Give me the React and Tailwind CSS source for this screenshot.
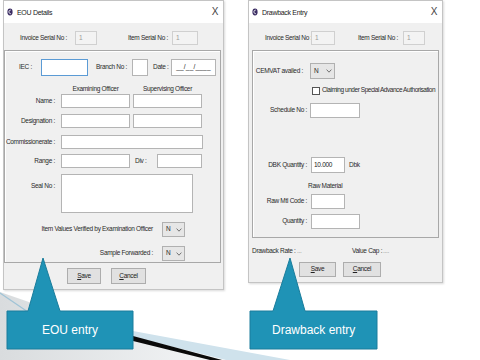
import clsx from "clsx";

function Field({ className, children }) {
  return (
    <div className={clsx("flex items-center border border-[#b4b4b4] bg-white px-[2px] text-[#222]", className)}>
      {children}
    </div>
  );
}

function ReadOnly({ className }) {
  return (
    <div className={clsx("flex items-center border border-[#d0d0d0] bg-[#f3f3f3] px-[3px] text-[#9a9a9a]", className)}>
      1
    </div>
  );
}

function Dropdown({ className }) {
  return (
    <div className={clsx("flex items-center justify-between border border-[#b0b0b0] bg-[#e6e6e6] pl-[3px] pr-[2px]", className)}>
      <span>N</span>
      <svg width="6" height="4" viewBox="0 0 6 4">
        <path d="M0.6 0.6 L3 3.2 L5.4 0.6" fill="none" stroke="#555" strokeWidth="0.8" />
      </svg>
    </div>
  );
}

function Btn({ label, className }) {
  return (
    <div className={clsx("flex items-center justify-center border border-[#adadad] bg-[#e1e1e1] text-[#222]", className)}>
      <span>
        <span className="underline">{label[0]}</span>
        {label.slice(1)}
      </span>
    </div>
  );
}

function TitleBar({ title }) {
  return (
    <div className="flex h-[22px] items-center justify-between bg-white pl-[3px] pr-[5px]">
      <div className="flex items-center gap-[4px]">
        <svg width="6" height="8" viewBox="0 0 6 8">
          <ellipse cx="3" cy="4" rx="2.6" ry="3.4" fill="#3b2d63" />
          <path d="M3.8 2 Q1.6 2.4 1.8 4 Q2 5.6 3.9 5.8" fill="none" stroke="#fff" strokeWidth="0.8" />
        </svg>
        <span className="text-[7px] text-[#222]">{title}</span>
      </div>
      <span className="text-[10px] font-light text-[#444]">X</span>
    </div>
  );
}

function EouWindow() {
  return (
    <div className="w-[221px] border border-[#c4c4c4] bg-[#f0f0f0] shadow-[1px_1px_2px_rgba(0,0,0,0.15)]">
      <TitleBar title="EOU Details" />
      <div className="mt-[8px] flex h-[14px] items-center pl-[16px]">
        <span className="w-[55px]">Invoice Serial No :</span>
        <ReadOnly className="h-[14px] w-[22px]" />
        <span className="ml-[31px] w-[44px]">Item Serial No :</span>
        <ReadOnly className="h-[14px] w-[26px]" />
      </div>

      <div className="mt-[5px] h-[213px] w-[217px] border border-[#a8a8a8] pt-[8px] shadow-[inset_1px_1px_0_#fff]">
        <div className="flex h-[17px] items-center">
          <span className="w-[27px] text-right">IEC :</span>
          <div className="ml-[9px] h-[17px] w-[47px] border border-[#5b9bd5] bg-white" />
          <span className="ml-[8px] w-[31px]">Branch No :</span>
          <Field className="ml-[5px] h-[17px] w-[16px]" />
          <span className="ml-[5px] w-[17px]">Date :</span>
          <Field className="ml-[1px] h-[17px] w-[45px] justify-center">
            <span className="tracking-[0.2px]">__/__/____</span>
          </Field>
        </div>

        <div className="flex h-[18px] items-end pb-[2px] pl-[56px]">
          <span className="w-[69px] text-center">Examining Officer</span>
          <span className="ml-[3px] w-[69px] text-center">Supervising Officer</span>
        </div>

        <div className="flex h-[14px] items-center">
          <span className="w-[50px] text-right">Name :</span>
          <Field className="ml-[6px] h-[14px] w-[69px]" />
          <Field className="ml-[3px] h-[14px] w-[69px]" />
        </div>
        <div className="mt-[6px] flex h-[14px] items-center">
          <span className="w-[50px] text-right">Designation :</span>
          <Field className="ml-[6px] h-[14px] w-[69px]" />
          <Field className="ml-[3px] h-[14px] w-[69px]" />
        </div>
        <div className="mt-[7px] flex h-[14px] items-center">
          <span className="w-[50px] text-right">Commissionerate :</span>
          <Field className="ml-[6px] h-[14px] w-[142px]" />
        </div>
        <div className="mt-[5px] flex h-[14px] items-center">
          <span className="w-[50px] text-right">Range :</span>
          <Field className="ml-[6px] h-[14px] w-[69px]" />
          <span className="ml-[5px] w-[22px]">Div :</span>
          <Field className="h-[14px] w-[45px]" />
        </div>
        <div className="mt-[6px] flex h-[39px] items-start">
          <span className="mt-[9px] w-[50px] text-right">Seal No :</span>
          <Field className="ml-[6px] h-[39px] w-[132px]" />
        </div>
        <div className="mt-[9px] flex h-[15px] items-center">
          <span className="w-[148px] text-right">Item Values Verified by Examination Officer</span>
          <Dropdown className="ml-[9px] h-[15px] w-[23px]" />
        </div>
        <div className="mt-[9px] flex h-[15px] items-center">
          <span className="w-[148px] text-right">Sample Forwarded :</span>
          <Dropdown className="ml-[9px] h-[15px] w-[23px]" />
        </div>
      </div>

      <div className="flex gap-[10px] pb-[5px] pl-[63px] pt-[5px]">
        <Btn label="Save" className="h-[16px] w-[34px]" />
        <Btn label="Cancel" className="h-[16px] w-[35px]" />
      </div>
    </div>
  );
}

function DrawbackWindow() {
  return (
    <div className="w-[195px] border border-[#c4c4c4] bg-[#f0f0f0] shadow-[1px_1px_2px_rgba(0,0,0,0.15)]">
      <TitleBar title="Drawback Entry" />
      <div className="mt-[8px] flex h-[14px] items-center pl-[16px]">
        <span className="w-[46px]">Invoice Serial No :</span>
        <ReadOnly className="h-[14px] w-[24px]" />
        <span className="ml-[23px] w-[45px]">Item Serial No :</span>
        <ReadOnly className="h-[14px] w-[22px]" />
      </div>

      <div className="ml-[3px] mt-[5px] h-[188px] w-[187px] border border-[#a8a8a8] pt-[12px] shadow-[inset_1px_1px_0_#fff]">
        <div className="flex h-[16px] items-center">
          <span className="w-[54px] pr-[4px] text-right">CEMVAT availed :</span>
          <Dropdown className="ml-[3px] h-[16px] w-[25px]" />
        </div>
        <div className="ml-[59px] mt-[7px] flex h-[9px] items-center">
          <div className="h-[8px] w-[8px] border border-[#555] bg-white" />
          <span className="ml-[2px] tracking-[-0.45px]">Claiming under Special Advance Authorisation</span>
        </div>
        <div className="mt-[8px] flex h-[15px] items-center">
          <span className="w-[54px] text-right">Schedule No :</span>
          <Field className="ml-[3px] h-[15px] w-[50px]" />
        </div>
        <div className="mt-[39px] flex h-[16px] items-center">
          <span className="w-[54px] text-right">DBK Quantity :</span>
          <Field className="ml-[4px] h-[16px] w-[34px]">10.000</Field>
          <span className="ml-[4px]">Dbk</span>
        </div>
        <div className="ml-[55px] mt-[8px] flex h-[10px] items-center">
          <span>Raw Material</span>
        </div>
        <div className="mt-[3px] flex h-[15px] items-center">
          <span className="w-[54px] text-right">Raw Mtl Code :</span>
          <Field className="ml-[4px] h-[15px] w-[34px]" />
        </div>
        <div className="mt-[5px] flex h-[15px] items-center">
          <span className="w-[54px] text-right">Quantity :</span>
          <Field className="ml-[4px] h-[15px] w-[49px]" />
        </div>
      </div>

      <div className="mt-[8px] flex h-[10px] items-center pl-[3px]">
        <span className="w-[45px]">Drawback Rate :</span>
        <span className="w-[55px] text-[#999]">...</span>
        <span className="w-[31px]">Value Cap :</span>
        <span className="text-[#999]">....</span>
      </div>
      <div className="flex gap-[7px] pb-[5px] pl-[50px] pt-[6px]">
        <Btn label="Save" className="h-[15px] w-[37px]" />
        <Btn label="Cancel" className="h-[15px] w-[38px]" />
      </div>
    </div>
  );
}

function Callout({ points, textClass, children }) {
  return (
    <>
      <svg className="absolute left-0 top-0" width="480" height="360" viewBox="0 0 480 360">
        <polygon points={points} fill="#1f93b6" stroke="#1a7d9c" strokeWidth="1" />
      </svg>
      <span className={clsx("absolute text-[12px] tracking-normal text-white", textClass)}>{children}</span>
    </>
  );
}

export default function App() {
  return (
    <div className="relative h-[360px] w-[480px] overflow-hidden whitespace-nowrap bg-white font-['Liberation_Sans',Arial,sans-serif] text-[6.5px] leading-none tracking-[-0.3px] text-[#2a2a2a]">
      <svg className="absolute left-0 top-0" width="480" height="360" viewBox="0 0 480 360">
        <defs>
          <linearGradient id="swoosh" x1="0" y1="0" x2="1" y2="0">
            <stop offset="0" stopColor="#d9dcde" />
            <stop offset="1" stopColor="#f4f6f7" />
          </linearGradient>
        </defs>
        <polygon points="0,292 133,338 226,360 0,360" fill="url(#swoosh)" />
        <polygon points="133,331 290,360 226,360 133,337" fill="#cfe2ec" />
        <line x1="0" y1="293" x2="28" y2="312" stroke="#9fc3d6" strokeWidth="1.2" />
        <polygon points="133,336 222,360 210,360 133,341" fill="#0a0a0a" />
      </svg>

      <div className="relative flex items-start gap-[24px] pl-[3px]">
        <EouWindow />
        <DrawbackWindow />
      </div>

      <Callout points="7,311 28,311 43,258 60,311 133,311 133,349 7,349" textClass="left-[42px] top-[324px]">
        EOU entry
      </Callout>
      <Callout points="250,311 273,311 290,258 305,311 377,311 377,349 250,349" textClass="left-[272px] top-[324px]">
        Drawback entry
      </Callout>
    </div>
  );
}
